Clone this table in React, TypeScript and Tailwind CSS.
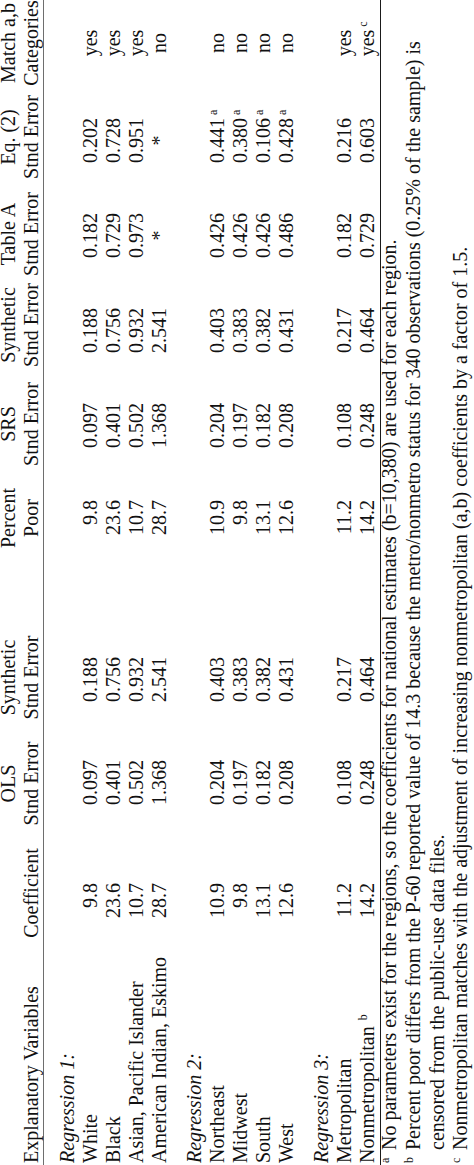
import React from "react";

const GRID =
  "grid grid-cols-[226px_92px_107.5px_106px_159.5px_94px_99px_91px_97px_98px]";

const HEAD_CLS = [
  "pl-[2px] text-left",
  "text-center",
  "pl-[19.5px] text-center",
  "pl-[18px] text-center",
  "pl-[71.5px] text-center",
  "pl-[6px] text-center",
  "pl-[11px] text-center",
  "pl-[3px] text-center",
  "pl-[9px] text-center",
  "pl-[2px] text-center",
];

const DATA_CLS = [
  "pl-[2px] text-left",
  "pr-[36px] text-right",
  "pr-[20.5px] text-right",
  "pr-[23.5px] text-right",
  "pr-[26px] text-right",
  "pr-[23px] text-right",
  "pr-[27px] text-right",
  "pr-[23px] text-right",
  "pr-[25px] text-right",
  "pl-[2px] text-center",
];

const headers: [string, string][] = [
  ["", "Explanatory Variables"],
  ["", "Coefficient"],
  ["OLS", "Stnd Error"],
  ["Synthetic", "Stnd Error"],
  ["Percent", "Poor"],
  ["SRS", "Stnd Error"],
  ["Synthetic", "Stnd Error"],
  ["Table A", "Stnd Error"],
  ["Eq. (2)", "Stnd Error"],
  ["Match a,b", "Categories"],
];

type Row = { label: string; italic?: boolean; labelSup?: string; vals?: string[] };

const groups: Row[][] = [
  [
    { label: "Regression 1:", italic: true },
    { label: "White", vals: ["9.8", "0.097", "0.188", "9.8", "0.097", "0.188", "0.182", "0.202", "yes"] },
    { label: "Black", vals: ["23.6", "0.401", "0.756", "23.6", "0.401", "0.756", "0.729", "0.728", "yes"] },
    { label: "Asian, Pacific Islander", vals: ["10.7", "0.502", "0.932", "10.7", "0.502", "0.932", "0.973", "0.951", "yes"] },
    { label: "American Indian, Eskimo", vals: ["28.7", "1.368", "2.541", "28.7", "1.368", "2.541", "*", "*", "no"] },
  ],
  [
    { label: "Regression 2:", italic: true },
    { label: "Northeast", vals: ["10.9", "0.204", "0.403", "10.9", "0.204", "0.403", "0.426", "0.441|a", "no"] },
    { label: "Midwest", vals: ["9.8", "0.197", "0.383", "9.8", "0.197", "0.383", "0.426", "0.380|a", "no"] },
    { label: "South", vals: ["13.1", "0.182", "0.382", "13.1", "0.182", "0.382", "0.426", "0.106|a", "no"] },
    { label: "West", vals: ["12.6", "0.208", "0.431", "12.6", "0.208", "0.431", "0.486", "0.428|a", "no"] },
  ],
  [
    { label: "Regression 3:", italic: true },
    { label: "Metropolitan", vals: ["11.2", "0.108", "0.217", "11.2", "0.108", "0.217", "0.182", "0.216", "yes"] },
    { label: "Nonmetropolitan", labelSup: "b", vals: ["14.2", "0.248", "0.464", "14.2", "0.248", "0.464", "0.729", "0.603", "yes|c"] },
  ],
];

function Value({ v }: { v: string }) {
  if (v === "*") {
    return <span className="inline-block w-[45px] text-center">*</span>;
  }
  const [main, sup] = v.split("|");
  if (!sup) return <span>{main}</span>;
  return (
    <span className="relative">
      {main}
      <span className="absolute left-full top-[1px] ml-[3px] text-[12px] leading-none">{sup}</span>
    </span>
  );
}

function Marker({ m }: { m: string }) {
  return (
    <span className="inline-block w-[15px] pl-[2px]">
      <span className="relative top-[-7px] text-[12px] leading-none">{m}</span>
    </span>
  );
}

export default function App() {
  return (
    <div className="relative w-[474px] h-[1165px] overflow-hidden bg-white">
      <div className="absolute left-0 top-0 w-[1170px] h-[474px] origin-top-left [transform:translateY(1165px)_rotate(-90deg)] font-['Liberation_Serif',serif] text-[20px] leading-[23px] text-[#111]">
        <div className="mt-[-3px]">
          <div className={GRID}>
            {headers.map(([a, b], i) => (
              <div key={i} className={HEAD_CLS[i] + " whitespace-nowrap"}>
                <div className="h-[23px]">{a}</div>
                <div className="h-[23px]">{b}</div>
              </div>
            ))}
          </div>
          <div className="flex flex-col gap-[12px] border-t border-b border-t-[#6e6e6e] border-b-[#1a1a1a] pt-[12px] pb-[1px]">
            {groups.map((g, gi) => (
              <div key={gi} className="flex flex-col">
                {g.map((r, ri) => (
                  <div key={ri} className={GRID + " h-[23px] whitespace-nowrap"}>
                    <div className={DATA_CLS[0] + (r.italic ? " italic" : "")}>
                      {r.label}
                      {r.labelSup && (
                        <span className="relative top-[-7px] ml-[6px] text-[12px] leading-none">{r.labelSup}</span>
                      )}
                    </div>
                    {r.vals &&
                      r.vals.map((v, vi) => (
                        <div key={vi} className={DATA_CLS[vi + 1]}>
                          <Value v={v} />
                        </div>
                      ))}
                  </div>
                ))}
              </div>
            ))}
          </div>
          <div className="mt-[-3px] whitespace-nowrap leading-[23.8px]">
            <div>
              <Marker m="a" />
              No parameters exist for the regions, so the coefficients for national estimates (b=10,380) are used for each region.
            </div>
            <div>
              <Marker m="b" />
              Percent poor differs from the P-60 reported value of 14.3 because the metro/nonmetro status for 340 observations (0.25% of the sample) is
            </div>
            <div className="pl-[15px]">censored from the public-use data files.</div>
            <div>
              <Marker m="c" />
              Nonmetropolitan matches with the adjustment of increasing nonmetropolitan (a,b) coefficients by a factor of 1.5.
            </div>
          </div>
        </div>
      </div>
    </div>
  );
}
